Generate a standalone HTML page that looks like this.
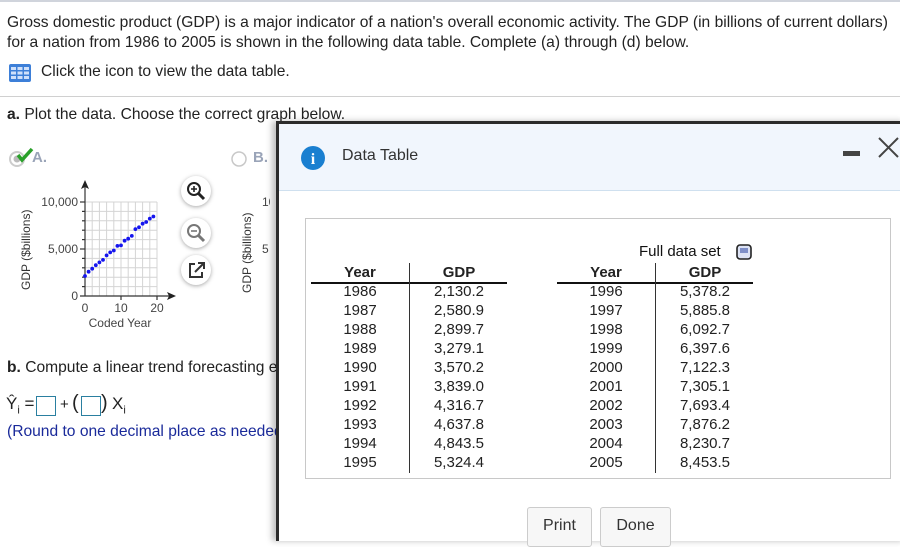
<!DOCTYPE html>
<html><head><meta charset="utf-8">
<style>
*{margin:0;padding:0;box-sizing:border-box}
body{width:900px;height:534px;overflow:hidden;background:#fff;font-family:"Liberation Sans",Arial,sans-serif;color:#222;position:relative}
.a{position:absolute;white-space:nowrap}
.t{font-size:15.6px;line-height:20px}
.modal{position:absolute;left:276px;top:121px;width:630px;height:420px;background:#fff;border-top:3px solid #2b2b2b;border-left:3px solid #2b2b2b;box-shadow:-4px 0 6px rgba(0,0,0,.25)}
.hd{position:absolute;left:0;top:0;right:0;height:67px;background:#f1f6fd;border-bottom:1px solid #cfe0ef}
.box{position:absolute;left:26px;top:94px;width:586px;height:261px;border:1px solid #c8c8c8}
.tc{font-size:15px;line-height:19px;text-align:center;position:absolute}
.btn{position:absolute;top:383px;height:40px;border:1px solid #ccc;border-radius:3px;background:#f7f7f7;font-size:16px;color:#333;text-align:center;line-height:36px}
.circ{position:absolute;width:30px;height:30px;border-radius:50%;background:#fff;box-shadow:0 1px 4px rgba(0,0,0,.35)}
</style></head><body>
<div class="a" style="left:0;top:0;width:900px;height:2px;background:#d0d4dc"></div>
<div class="a t" style="left:7px;top:13px">Gross domestic product (GDP) is a major indicator of a nation's overall economic activity. The GDP (in billions of current dollars)</div>
<div class="a t" style="left:7px;top:33px">for a nation from 1986 to 2005 is shown in the following data table. Complete (a) through (d) below.</div>
<svg class="a" style="left:9px;top:64px" width="22" height="18" viewBox="0 0 22 18"><rect x="0" y="0" width="22" height="18" rx="2" fill="#3d7fd8"/><g fill="#cfe0fa"><rect x="2" y="3" width="5" height="3"/><rect x="8.5" y="3" width="5" height="3"/><rect x="15" y="3" width="5" height="3"/><rect x="2" y="7.5" width="5" height="3"/><rect x="8.5" y="7.5" width="5" height="3"/><rect x="15" y="7.5" width="5" height="3"/><rect x="2" y="12" width="5" height="3"/><rect x="8.5" y="12" width="5" height="3"/><rect x="15" y="12" width="5" height="3"/></g></svg>
<div class="a t" style="left:41px;top:62px">Click the icon to view the data table.</div>
<div class="a" style="left:0;top:96px;width:900px;height:1px;background:#d0d0d0"></div>
<div class="a t" style="left:7px;top:105px"><b>a.</b> Plot the data. Choose the correct graph below.</div>

<svg class="a" style="left:8px;top:146px" width="30" height="22" viewBox="0 0 30 22"><circle cx="9" cy="13" r="7" fill="none" stroke="#ccc" stroke-width="2"/><circle cx="9" cy="13" r="3.5" fill="#bbb"/><path d="M10 9 L14 14 L24 3" fill="none" stroke="#2aa02a" stroke-width="3.5"/></svg>
<div class="a" style="left:32px;top:149px;font-size:15px;color:#9aa4b8;font-weight:bold">A.</div>
<svg class="a" style="left:0;top:175px" width="270" height="160">
<text x="0" y="0" transform="translate(30,115) rotate(-90)" font-size="12" fill="#333" font-family="Liberation Sans">GDP ($billions)</text>
<g stroke="#d4d4d4" stroke-width="1">
<line x1="92.2" y1="27" x2="92.2" y2="121"/><line x1="99.4" y1="27" x2="99.4" y2="121"/><line x1="106.6" y1="27" x2="106.6" y2="121"/><line x1="113.8" y1="27" x2="113.8" y2="121"/><line x1="121" y1="27" x2="121" y2="121"/><line x1="128.2" y1="27" x2="128.2" y2="121"/><line x1="135.4" y1="27" x2="135.4" y2="121"/><line x1="142.6" y1="27" x2="142.6" y2="121"/><line x1="149.8" y1="27" x2="149.8" y2="121"/><line x1="157" y1="27" x2="157" y2="121"/>
<line x1="85" y1="27" x2="157" y2="27"/><line x1="85" y1="36.4" x2="157" y2="36.4"/><line x1="85" y1="45.8" x2="157" y2="45.8"/><line x1="85" y1="55.2" x2="157" y2="55.2"/><line x1="85" y1="64.6" x2="157" y2="64.6"/><line x1="85" y1="74" x2="157" y2="74"/><line x1="85" y1="83.4" x2="157" y2="83.4"/><line x1="85" y1="92.8" x2="157" y2="92.8"/><line x1="85" y1="102.2" x2="157" y2="102.2"/><line x1="85" y1="111.6" x2="157" y2="111.6"/>
</g>
<g stroke="#333" stroke-width="1.2"><line x1="85" y1="121" x2="85" y2="12"/><line x1="80" y1="121" x2="172" y2="121"/>
<line x1="80" y1="27" x2="85" y2="27"/><line x1="80" y1="74" x2="85" y2="74"/>
<line x1="82" y1="36.4" x2="85" y2="36.4"/><line x1="82" y1="45.8" x2="85" y2="45.8"/><line x1="82" y1="55.2" x2="85" y2="55.2"/><line x1="82" y1="64.6" x2="85" y2="64.6"/><line x1="82" y1="83.4" x2="85" y2="83.4"/><line x1="82" y1="92.8" x2="85" y2="92.8"/><line x1="82" y1="102.2" x2="85" y2="102.2"/><line x1="82" y1="111.6" x2="85" y2="111.6"/>
<line x1="121" y1="121" x2="121" y2="125"/><line x1="157" y1="121" x2="157" y2="125"/></g>
<path d="M81 14 L85 5 L89 14 L85 12 Z" fill="#222"/><path d="M167 117 L176 121 L167 125 L169 121 Z" fill="#222"/>
<g font-size="12" fill="#444" font-family="Liberation Sans" text-anchor="end"><text x="78" y="31">10,000</text><text x="78" y="78">5,000</text><text x="78" y="125">0</text></g>
<g font-size="12" fill="#444" font-family="Liberation Sans" text-anchor="middle"><text x="85" y="137">0</text><text x="121" y="137">10</text><text x="157" y="137">20</text><text x="120" y="152">Coded Year</text></g>
<g fill="#1515ee">
<circle cx="85" cy="101" r="1.9"/><circle cx="88.6" cy="96.7" r="1.9"/><circle cx="92.2" cy="93.7" r="1.9"/><circle cx="95.8" cy="90.2" r="1.9"/><circle cx="99.4" cy="87.4" r="1.9"/><circle cx="103" cy="84.9" r="1.9"/><circle cx="106.6" cy="80.4" r="1.9"/><circle cx="110.2" cy="77.4" r="1.9"/><circle cx="113.8" cy="75.5" r="1.9"/><circle cx="117.4" cy="70.9" r="1.9"/>
<circle cx="121" cy="70.4" r="1.9"/><circle cx="124.6" cy="65.7" r="1.9"/><circle cx="128.2" cy="63.7" r="1.9"/><circle cx="131.8" cy="60.9" r="1.9"/><circle cx="135.4" cy="54.1" r="1.9"/><circle cx="139" cy="52.3" r="1.9"/><circle cx="142.6" cy="48.7" r="1.9"/><circle cx="146.2" cy="47" r="1.9"/><circle cx="149.8" cy="43.6" r="1.9"/><circle cx="153.4" cy="41.5" r="1.9"/></g>
<text x="0" y="0" transform="translate(251,118) rotate(-90)" font-size="12" fill="#333" font-family="Liberation Sans">GDP ($billions)</text>
<text x="262" y="31" font-size="12" fill="#444" font-family="Liberation Sans">10</text>
<text x="262" y="78" font-size="12" fill="#444" font-family="Liberation Sans">5</text>
</svg>
<div class="circ" style="left:181px;top:176px"></div>
<div class="circ" style="left:181px;top:218px"></div>
<div class="circ" style="left:181px;top:255px"></div>
<svg class="a" style="left:181px;top:176px" width="30" height="30"><circle cx="13" cy="13" r="6" fill="none" stroke="#222" stroke-width="2"/><path d="M17.5 17.5 L23 23" stroke="#222" stroke-width="3"/><path d="M10 13 H16 M13 10 V16" stroke="#222" stroke-width="1.6"/></svg>
<svg class="a" style="left:181px;top:218px" width="30" height="30"><circle cx="13" cy="13" r="6" fill="none" stroke="#777" stroke-width="2"/><path d="M17.5 17.5 L23 23" stroke="#777" stroke-width="3"/><path d="M10 13 H16" stroke="#777" stroke-width="1.6"/></svg>
<svg class="a" style="left:181px;top:255px" width="30" height="30"><path d="M14 9 H9 V22 H21 V17" fill="none" stroke="#333" stroke-width="2"/><path d="M14 17 L22 9 M17 8 H23 V14" fill="none" stroke="#333" stroke-width="2"/></svg>
<svg class="a" style="left:230px;top:150px" width="18" height="18"><circle cx="9" cy="9" r="7" fill="#fff" stroke="#c8c8c8" stroke-width="1.5"/></svg>
<div class="a" style="left:253px;top:149px;font-size:15px;color:#9aa4b8;font-weight:bold">B.</div>

<div class="a t" style="left:7px;top:358px"><b>b.</b> Compute a linear trend forecasting equation</div>
<div class="a" style="left:6px;top:394px;font-size:17px;line-height:20px">Ŷ<sub style="font-size:11px">i</sub> =</div>
<div class="a" style="left:36px;top:396px;width:20px;height:20px;border:1.5px solid #2a7fa0"></div>
<div class="a" style="left:60px;top:396px;font-size:15px">+</div>
<div class="a" style="left:72px;top:392px;font-size:20px">(</div>
<div class="a" style="left:81px;top:396px;width:20px;height:20px;border:1.5px solid #2a7fa0"></div>
<div class="a" style="left:101px;top:392px;font-size:20px">)</div>
<div class="a" style="left:112px;top:394px;font-size:17px;line-height:20px">X<sub style="font-size:11px">i</sub></div>
<div class="a t" style="left:7px;top:422px;color:#1a2a9a">(Round to one decimal place as needed.)</div>

<div class="modal">
<div class="hd">
<svg class="a" style="left:22px;top:22px" width="24" height="24"><circle cx="12" cy="12" r="12" fill="#1a7fd0"/><text x="12" y="18" text-anchor="middle" font-size="16" font-weight="bold" fill="#fff" font-family="Liberation Serif">i</text></svg>
<div class="a" style="left:63px;top:23px;font-size:16px;color:#333">Data Table</div>
<div class="a" style="left:564px;top:27px;width:17px;height:5px;background:#444"></div>
<svg class="a" style="left:599px;top:13px" width="21" height="21"><path d="M1 1 L20 20 M20 1 L1 20" stroke="#444" stroke-width="2"/></svg>
</div>
<div class="box"></div>
<div class="a" style="left:360px;top:119px;font-size:15px;color:#111">Full data set</div>
<svg class="a" style="left:457px;top:120px" width="16" height="16"><rect x="1" y="1" width="14" height="14" rx="3" fill="#dde3f5" stroke="#222" stroke-width="1.6"/><rect x="4" y="4" width="8" height="5" fill="#7f8fc8"/></svg>
<div class="a" style="left:32px;top:158px;width:196px;height:1.5px;background:#111"></div>
<div class="a" style="left:278px;top:158px;width:196px;height:1.5px;background:#111"></div>
<div class="a" style="left:130px;top:139px;width:1px;height:210px;background:#333"></div>
<div class="a" style="left:376px;top:139px;width:1px;height:210px;background:#333"></div>
<div class="tc" style="left:32px;top:139px;width:98px;font-weight:bold">Year<br><span style="font-weight:normal">1986<br>1987<br>1988<br>1989<br>1990<br>1991<br>1992<br>1993<br>1994<br>1995</span></div>
<div class="tc" style="left:131px;top:139px;width:98px;font-weight:bold">GDP<br><span style="font-weight:normal">2,130.2<br>2,580.9<br>2,899.7<br>3,279.1<br>3,570.2<br>3,839.0<br>4,316.7<br>4,637.8<br>4,843.5<br>5,324.4</span></div>
<div class="tc" style="left:278px;top:139px;width:98px;font-weight:bold">Year<br><span style="font-weight:normal">1996<br>1997<br>1998<br>1999<br>2000<br>2001<br>2002<br>2003<br>2004<br>2005</span></div>
<div class="tc" style="left:377px;top:139px;width:98px;font-weight:bold">GDP<br><span style="font-weight:normal">5,378.2<br>5,885.8<br>6,092.7<br>6,397.6<br>7,122.3<br>7,305.1<br>7,693.4<br>7,876.2<br>8,230.7<br>8,453.5</span></div>
<div class="btn" style="left:248px;width:65px">Print</div>
<div class="btn" style="left:321px;width:71px">Done</div>
</div>
</body></html>
